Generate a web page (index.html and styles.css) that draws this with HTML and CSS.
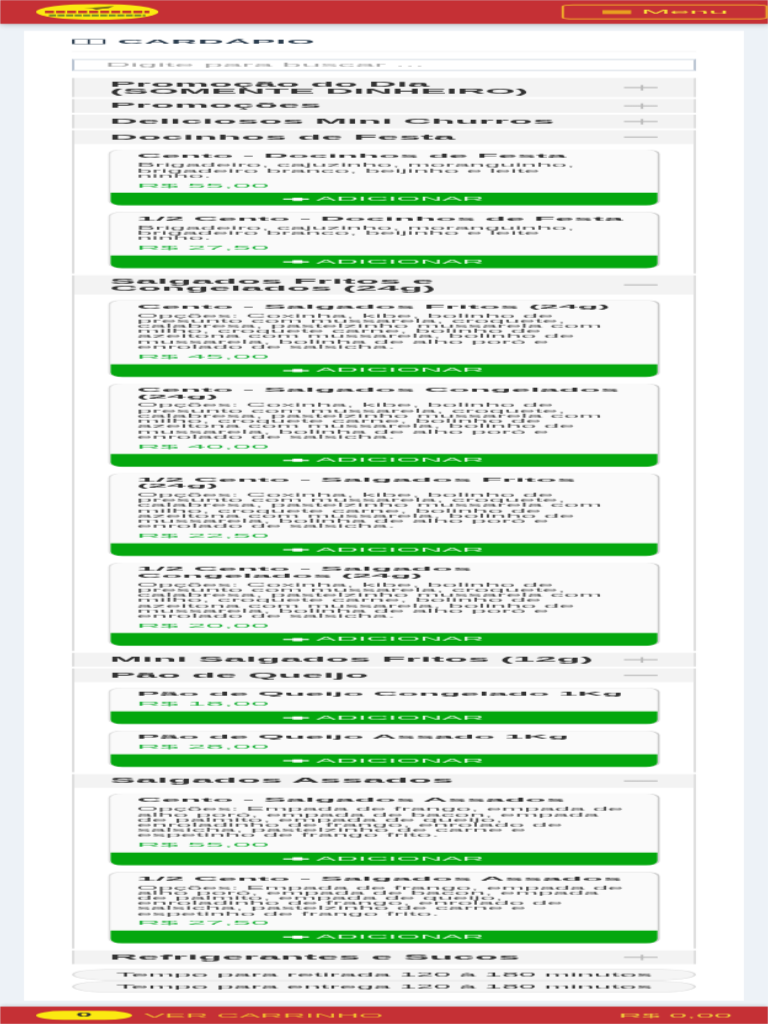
FILE: index.html
```html
<!DOCTYPE html>
<html lang="pt-BR">

<head>
    <meta charset="UTF-8" />
    <meta name="viewport" content="width=device-width, initial-scale=1.0" />
    <title>Cardápio</title>
    <link rel="stylesheet" href="styles.css">
</head>

<body>
    <div class="frame">
        <div class="page">
            <header class="topbar">
                <svg class="logo" viewBox="0 0 122 40" preserveAspectRatio="none" role="img" aria-label="Logo">
                    <ellipse cx="61" cy="20" rx="61" ry="20" fill="#fbe911" />
                    <path d="M48 11 L78 5 L72 11 L66 12 L60 15 L56 11 Z" fill="#7c6a1c" />
                    <line x1="9" y1="20" x2="113" y2="20" stroke="#c5302f" stroke-width="6" stroke-dasharray="9 2" />
                    <line x1="13" y1="29" x2="109" y2="29" stroke="#6f8a2a" stroke-width="5" stroke-dasharray="7 1.5" />
                </svg>
                <button class="menu-btn">
                    <span class="burger"></span>
                    Menu
                </button>
            </header>

            <main class="content">
                <div class="panel">
                    <h1 class="panel-title">
                        <svg class="book" viewBox="0 0 18 14" preserveAspectRatio="none">
                            <rect x="0.7" y="1" width="16.6" height="12" fill="none" stroke="#2c3e50" stroke-width="1.4" />
                            <line x1="9" y1="1" x2="9" y2="13" stroke="#2c3e50" stroke-width="1.2" />
                        </svg>
                        CARDÁPIO
                    </h1>
                    <input class="search" type="text" placeholder="Digite para buscar ...">

                    <div class="acc">
                        <div class="acc-head">
                            <span class="acc-name">Promoção do Dia<br>(SOMENTE DINHEIRO)</span>
                            <span class="toggle"></span>
                        </div>
                    </div>
                    <div class="acc">
                        <div class="acc-head">
                            <span class="acc-name">Promoções</span>
                            <span class="toggle"></span>
                        </div>
                    </div>
                    <div class="acc">
                        <div class="acc-head">
                            <span class="acc-name">Deliciosos Mini Churros</span>
                            <span class="toggle"></span>
                        </div>
                    </div>

                    <div class="acc">
                        <div class="acc-head">
                            <span class="acc-name">Docinhos de Festa</span>
                            <span class="toggle open"></span>
                        </div>
                        <div class="acc-body">
                            <div class="item">
                                <h3 class="item-name">Cento - Docinhos de Festa</h3>
                                <p class="item-desc">Brigadeiro, cajuzinho, moranguinho, brigadeiro branco, beijinho e leite<br>ninho.</p>
                                <div class="item-price">R$ 55,00</div>
                                <button class="add-btn"><span class="plus"></span>ADICIONAR</button>
                            </div>
                            <div class="item">
                                <h3 class="item-name">1/2 Cento - Docinhos de Festa</h3>
                                <p class="item-desc">Brigadeiro, cajuzinho, moranguinho, brigadeiro branco, beijinho e leite<br>ninho.</p>
                                <div class="item-price">R$ 27,50</div>
                                <button class="add-btn"><span class="plus"></span>ADICIONAR</button>
                            </div>
                        </div>
                    </div>

                    <div class="acc">
                        <div class="acc-head">
                            <span class="acc-name">Salgados Fritos e<br>Congelados (24g)</span>
                            <span class="toggle open"></span>
                        </div>
                        <div class="acc-body">
                            <div class="item">
                                <h3 class="item-name">Cento - Salgados Fritos (24g)</h3>
                                <p class="item-desc">Opções: Coxinha, kibe, bolinho de presunto com mussarela, croquete, calabresa, pastelzinho mussarela com milho, croquete carne, bolinho de azeitona com mussarela, bolinho de mussarela, bolinha de alho poró e enrolado de salsicha.</p>
                                <div class="item-price">R$ 45,00</div>
                                <button class="add-btn"><span class="plus"></span>ADICIONAR</button>
                            </div>
                            <div class="item">
                                <h3 class="item-name">Cento - Salgados Congelados (24g)</h3>
                                <p class="item-desc">Opções: Coxinha, kibe, bolinho de presunto com mussarela, croquete, calabresa, pastelzinho mussarela com milho, croquete carne, bolinho de azeitona com mussarela, bolinho de mussarela, bolinha de alho poró e enrolado de salsicha.</p>
                                <div class="item-price">R$ 40,00</div>
                                <button class="add-btn"><span class="plus"></span>ADICIONAR</button>
                            </div>
                            <div class="item">
                                <h3 class="item-name">1/2 Cento - Salgados Fritos (24g)</h3>
                                <p class="item-desc">Opções: Coxinha, kibe, bolinho de presunto com mussarela, croquete, calabresa, pastelzinho mussarela com milho, croquete carne, bolinho de azeitona com mussarela, bolinho de mussarela, bolinha de alho poró e enrolado de salsicha.</p>
                                <div class="item-price">R$ 22,50</div>
                                <button class="add-btn"><span class="plus"></span>ADICIONAR</button>
                            </div>
                            <div class="item">
                                <h3 class="item-name">1/2 Cento - Salgados Congelados (24g)</h3>
                                <p class="item-desc">Opções: Coxinha, kibe, bolinho de presunto com mussarela, croquete, calabresa, pastelzinho mussarela com milho, croquete carne, bolinho de azeitona com mussarela, bolinho de mussarela, bolinha de alho poró e enrolado de salsicha.</p>
                                <div class="item-price">R$ 20,00</div>
                                <button class="add-btn"><span class="plus"></span>ADICIONAR</button>
                            </div>
                        </div>
                    </div>

                    <div class="acc">
                        <div class="acc-head">
                            <span class="acc-name">Mini Salgados Fritos (12g)</span>
                            <span class="toggle"></span>
                        </div>
                    </div>

                    <div class="acc">
                        <div class="acc-head">
                            <span class="acc-name">Pão de Queijo</span>
                            <span class="toggle open"></span>
                        </div>
                        <div class="acc-body">
                            <div class="item">
                                <h3 class="item-name">Pão de Queijo Congelado 1Kg</h3>
                                <div class="item-price">R$ 18,00</div>
                                <button class="add-btn"><span class="plus"></span>ADICIONAR</button>
                            </div>
                            <div class="item">
                                <h3 class="item-name">Pão de Queijo Assado 1Kg</h3>
                                <div class="item-price">R$ 28,00</div>
                                <button class="add-btn"><span class="plus"></span>ADICIONAR</button>
                            </div>
                        </div>
                    </div>

                    <div class="acc">
                        <div class="acc-head">
                            <span class="acc-name">Salgados Assados</span>
                            <span class="toggle open"></span>
                        </div>
                        <div class="acc-body">
                            <div class="item">
                                <h3 class="item-name">Cento - Salgados Assados</h3>
                                <p class="item-desc">Opções: Empada de frango, empada de alho poró, empada de bacon, empada de palmito, empada de queijo, enroladinho de frango, enrolado de salsicha, pastelzinho de carne e espetinho de frango frito.</p>
                                <div class="item-price">R$ 55,00</div>
                                <button class="add-btn"><span class="plus"></span>ADICIONAR</button>
                            </div>
                            <div class="item">
                                <h3 class="item-name">1/2 Cento - Salgados Assados</h3>
                                <p class="item-desc">Opções: Empada de frango, empada de alho poró, empada de bacon, empada de palmito, empada de queijo, enroladinho de frango, enrolado de salsicha, pastelzinho de carne e espetinho de frango frito.</p>
                                <div class="item-price">R$ 27,50</div>
                                <button class="add-btn"><span class="plus"></span>ADICIONAR</button>
                            </div>
                        </div>
                    </div>

                    <div class="acc">
                        <div class="acc-head">
                            <span class="acc-name">Refrigerantes e Sucos</span>
                            <span class="toggle"></span>
                        </div>
                    </div>

                    <div class="note first">Tempo para retirada 120 à 180 minutos</div>
                    <div class="note">Tempo para entrega 120 à 180 minutos</div>
                </div>
            </main>

            <footer class="cartbar">
                <span class="cart-count">0</span>
                <span class="cart-label">VER CARRINHO</span>
                <span class="cart-total">R$ 0,00</span>
            </footer>
        </div>
    </div>
</body>

</html>
```

FILE: styles.css
```css
* {
    box-sizing: border-box;
    margin: 0;
    padding: 0;
}

html,
body {
    height: 100%;
    overflow: hidden;
    background-color: #edf2f7;
}

.frame {
    height: 100vh;
    overflow: hidden;
}

/* a 320px wide page stretched to fill the frame */
.page {
    width: 320px;
    height: 2625.6px;
    display: flex;
    flex-direction: column;
    font-family: "Liberation Sans", Arial, sans-serif;
    color: #333;
    background-color: #edf2f7;
    transform: scale(2.4, 0.39);
    transform-origin: 0 0;
}

.topbar {
    height: 61px;
    flex-shrink: 0;
    display: flex;
    align-items: center;
    justify-content: space-between;
    padding-left: 14.6px;
    background-color: #c53035;
    box-shadow: 0 3px 6px rgba(0, 0, 0, 0.25);
}

.logo {
    width: 51px;
    height: 41px;
}

.menu-btn {
    width: 86px;
    height: 39px;
    display: flex;
    align-items: center;
    justify-content: center;
    gap: 4.6px;
    background: none;
    border: solid #f0a92b;
    border-width: 3px 1px;
    border-radius: 5px;
    color: #fbe53a;
    font-family: inherit;
    font-size: 14.5px;
}

.burger {
    width: 12px;
    height: 10px;
    background-color: #e8a020;
}

.content {
    flex: 1;
    min-height: 0;
    padding: 18px 10px 15px;
}

.panel {
    height: 100%;
    padding: 0 20px;
    background-color: #fff;
}

.panel-title {
    height: 54px;
    display: flex;
    align-items: center;
    gap: 5px;
    padding-top: 4px;
    border-bottom: 2px solid #f5f5f5;
    color: #2c3e50;
    font-size: 15px;
    letter-spacing: 0.3px;
}

.book {
    width: 14px;
    height: 14px;
}

.search {
    display: block;
    width: 100%;
    height: 31px;
    margin: 18px 0;
    padding-left: 13px;
    border: solid #dde3ea;
    border-width: 3px 1px;
    border-left-color: #b9c4d2;
    border-right-color: #b9c4d2;
    font-family: inherit;
    font-size: 14.4px;
}

.search::placeholder {
    color: #aaa;
}

.acc {
    margin-bottom: 5px;
    border-left: 1px solid #ddd;
    border-right: 1px solid #ddd;
}

.acc-head {
    min-height: 35px;
    display: flex;
    align-items: center;
    justify-content: space-between;
    padding: 7px 15px 7px 14.7px;
    background-color: #f3f3f3;
    color: #333;
    font-size: 16.2px;
    font-weight: bold;
    line-height: 17.6px;
}

.toggle {
    width: 14px;
    height: 14px;
    flex-shrink: 0;
    background:
        linear-gradient(#bbb, #bbb) center / 100% 3px no-repeat,
        linear-gradient(#bbb, #bbb) center / 1px 100% no-repeat;
}

.toggle.open {
    background: linear-gradient(#bbb, #bbb) center / 100% 3px no-repeat;
}

.acc-body {
    padding: 14px 14px 13px;
}

.item {
    overflow: hidden;
    margin-bottom: 16px;
    background-color: #fafafa;
    border: 1px solid #e0e0e0;
    border-right-color: #ccc;
    border-bottom: none;
    border-radius: 6px 6px 6px 6px / 12px 12px 12px 12px;
}

.item:last-child {
    margin-bottom: 0;
}

.item-name {
    padding: 8px 11px 0;
    color: #333;
    font-size: 14.2px;
    line-height: 16px;
}

.item-desc {
    padding: 10px 13px 0 11px;
    color: #555;
    font-size: 11.4px;
    line-height: 13.4px;
}

.item-price {
    padding: 8px 11px;
    color: #2eb84a;
    font-size: 13.6px;
    line-height: 20px;
}

.add-btn {
    display: flex;
    align-items: center;
    justify-content: center;
    gap: 3px;
    width: 100%;
    height: 33px;
    background-color: #04a70e;
    border: none;
    color: #d8f5d8;
    font-family: inherit;
    font-size: 12.6px;
}

.plus {
    width: 10.4px;
    height: 12px;
    background:
        linear-gradient(#fff, #fff) center / 100% 3px no-repeat,
        linear-gradient(#fff, #fff) center / 4px 8px no-repeat;
}

.note {
    height: 28px;
    margin-bottom: 3px;
    border: 1px solid #ddd;
    border-radius: 14px;
    background-color: #f5f5f5;
    color: #333;
    font-size: 12.8px;
    line-height: 26px;
    text-align: center;
}

.note.first {
    margin-top: 13px;
}

.cartbar {
    height: 44.5px;
    flex-shrink: 0;
    display: flex;
    align-items: center;
    padding: 0 15px;
    background-color: #c53035;
    box-shadow: 0 -2px 4px rgba(0, 0, 0, 0.15);
}

.cart-count {
    width: 40px;
    height: 23px;
    border-radius: 12px;
    background-color: #fbe911;
    color: #333;
    font-size: 12px;
    font-weight: bold;
    line-height: 23px;
    text-align: center;
}

.cart-label {
    margin-left: 5px;
    flex: 1;
    color: #f0b72f;
    font-size: 13px;
}

.cart-total {
    color: #f0c83a;
    font-size: 13.5px;
}
```
